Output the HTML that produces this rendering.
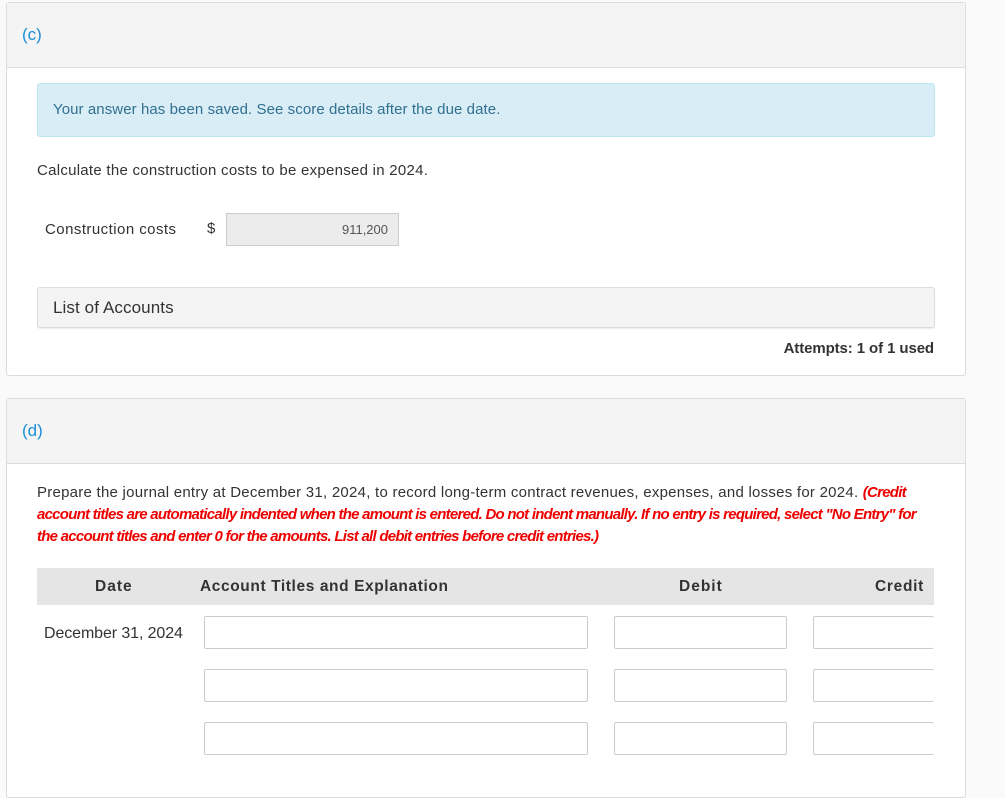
<!DOCTYPE html>
<html><head><meta charset="utf-8"><style>
*{box-sizing:border-box;margin:0;padding:0}
body{width:1005px;height:776px;overflow:hidden;background:#fafafa;font-family:"Liberation Sans",sans-serif;color:#333;position:relative}
.a{position:absolute}
.panel{position:absolute;left:6px;width:960px;background:#fff;border:1px solid #dcdcdc;border-radius:3px}
.hdr{position:absolute;left:0;right:0;top:0;height:65px;background:#f4f4f4;border-bottom:1px solid #ddd}
.lbl{position:absolute;left:15px;top:22px;font-size:17px;color:#1a8fd6}
.inp{position:absolute;height:33px;background:#fff;border:1px solid #ccc;border-radius:2px}
.t{white-space:nowrap}
</style></head><body>
<div class="panel" style="top:2px;height:374px">
 <div class="hdr"></div><div class="lbl">(c)</div>
</div>
<div class="a" style="left:37px;top:83px;width:898px;height:54px;background:#d9edf7;border:1px solid #bce8f1;border-radius:3px"></div>
<div class="a t" style="left:53px;top:101px;font-size:15px;color:#31708f;letter-spacing:0.08px">Your answer has been saved. See score details after the due date.</div>
<div class="a t" style="left:37px;top:162px;font-size:15px;color:#333;letter-spacing:0.27px">Calculate the construction costs to be expensed in 2024.</div>
<div class="a t" style="left:45px;top:221px;font-size:15px;letter-spacing:0.45px">Construction costs</div>
<div class="a t" style="left:207px;top:220px;font-size:15px">$</div>
<div class="a" style="left:226px;top:213px;width:173px;height:33px;background:#ececec;border:1px solid #ccc"></div>
<div class="a t" style="left:226px;width:162px;text-align:right;top:222px;font-size:13px;color:#555">911,200</div>
<div class="a" style="left:37px;top:287px;width:898px;height:41px;background:#f4f4f4;border:1px solid #ddd;border-radius:3px;box-shadow:0 1px 1px rgba(0,0,0,.08)"></div>
<div class="a t" style="left:53px;top:298px;font-size:17px;letter-spacing:0.1px">List of Accounts</div>
<div class="a t" style="right:71px;top:340px;font-size:15px;font-weight:bold;letter-spacing:-0.1px">Attempts: 1 of 1 used</div>

<div class="panel" style="top:398px;height:400px">
 <div class="hdr"></div><div class="lbl">(d)</div>
</div>
<div class="a t" style="left:37px;top:482px;font-size:15px;line-height:22px;width:960px;letter-spacing:0.25px">Prepare the journal entry at December 31, 2024, to record long-term contract revenues, expenses, and losses for 2024. <b style="color:#e00;font-style:italic;letter-spacing:-0.75px">(Credit<br>account titles are automatically indented when the amount is entered. Do not indent manually. If no entry is required, select "No Entry" for<br>the account titles and enter 0 for the amounts. List all debit entries before credit entries.)</b></div>
<div class="a" style="left:37px;top:568px;width:897px;height:37px;background:#e5e5e5"></div>
<div class="a t" style="left:95px;top:578px;font-size:15.5px;font-weight:bold;letter-spacing:1px">Date</div>
<div class="a t" style="left:200px;top:578px;font-size:15.5px;font-weight:bold;letter-spacing:0.6px">Account Titles and Explanation</div>
<div class="a t" style="left:679px;top:578px;font-size:15.5px;font-weight:bold;letter-spacing:1px">Debit</div>
<div class="a t" style="left:875px;top:578px;font-size:15.5px;font-weight:bold;letter-spacing:0.7px">Credit</div>
<div class="a t" style="left:44px;top:625px;font-size:16px;letter-spacing:-0.1px">December 31, 2024</div>
<div class="inp" style="left:204px;top:616px;width:384px"></div>
<div class="inp" style="left:614px;top:616px;width:173px"></div>
<div class="inp" style="left:813px;top:616px;width:121px;border-right:none"></div>
<div class="inp" style="left:204px;top:669px;width:384px"></div>
<div class="inp" style="left:614px;top:669px;width:173px"></div>
<div class="inp" style="left:813px;top:669px;width:121px;border-right:none"></div>
<div class="inp" style="left:204px;top:722px;width:384px"></div>
<div class="inp" style="left:614px;top:722px;width:173px"></div>
<div class="inp" style="left:813px;top:722px;width:121px;border-right:none"></div>
</body></html>
